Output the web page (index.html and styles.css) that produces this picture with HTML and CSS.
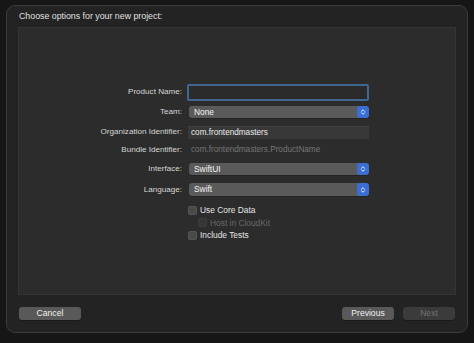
FILE: index.html
```html
<!DOCTYPE html>
<html lang="en">
<head>
<meta charset="utf-8">
<title>Choose options for your new project</title>
<link rel="stylesheet" href="styles.css">
</head>
<body>
<div class="window">
  <div class="title">Choose options for your new project:</div>
  <div class="panel">
    <div class="form">
      <div class="label r1">Product Name:</div>
      <div class="ctl r1"><div class="field focused"></div></div>

      <div class="label r2">Team:</div>
      <div class="ctl r2">
        <div class="popup"><span class="popup-text">None</span><span class="cap"><svg viewBox="0 0 8 10" width="6" height="8"><path d="M2 4 L4 2 L6 4 M2 6 L4 8 L6 6" fill="none" stroke="#fff" stroke-width="1.2" stroke-linecap="round" stroke-linejoin="round"/></svg></span></div>
      </div>

      <div class="label r3">Organization Identifier:</div>
      <div class="ctl r3"><div class="field plain">com.frontendmasters</div></div>

      <div class="label r4">Bundle Identifier:</div>
      <div class="ctl r4"><div class="bundle">com.frontendmasters.ProductName</div></div>

      <div class="label r5">Interface:</div>
      <div class="ctl r5">
        <div class="popup"><span class="popup-text">SwiftUI</span><span class="cap"><svg viewBox="0 0 8 10" width="6" height="8"><path d="M2 4 L4 2 L6 4 M2 6 L4 8 L6 6" fill="none" stroke="#fff" stroke-width="1.2" stroke-linecap="round" stroke-linejoin="round"/></svg></span></div>
      </div>

      <div class="label r6">Language:</div>
      <div class="ctl r6">
        <div class="popup"><span class="popup-text">Swift</span><span class="cap"><svg viewBox="0 0 8 10" width="6" height="8"><path d="M2 4 L4 2 L6 4 M2 6 L4 8 L6 6" fill="none" stroke="#fff" stroke-width="1.2" stroke-linecap="round" stroke-linejoin="round"/></svg></span></div>
      </div>

      <div class="ctl checks">
        <div class="check"><span class="box"></span><span>Use Core Data</span></div>
        <div class="check sub disabled"><span class="box"></span><span>Host in CloudKit</span></div>
        <div class="check"><span class="box"></span><span>Include Tests</span></div>
      </div>
    </div>
  </div>
  <div class="footer">
    <div class="btn cancel">Cancel</div>
    <div class="spacer"></div>
    <div class="btn">Previous</div>
    <div class="btn disabled">Next</div>
  </div>
</div>
</body>
</html>
```
FILE: styles.css
```css
html, body {
  margin: 0;
  padding: 0;
  background: #161616;
}
body {
  font-family: "Liberation Sans", Arial, sans-serif;
  width: 474px;
  height: 343px;
  overflow: hidden;
}
.window {
  margin: 5px 0 0 6px;
  width: 460px;
  height: 326px;
  border: 1px solid #3b3b3b;
  border-radius: 9px;
  background: #232323;
  display: flex;
  flex-direction: column;
}
.title {
  height: 21px;
  line-height: 21px;
  padding-left: 12px;
  font-size: 8.8px;
  color: #e0e0e0;
}
.panel {
  margin: 0 11px;
  height: 266px;
  background: #2c2c2c;
  border: 1px solid #353535;
}
.form {
  display: grid;
  grid-template-columns: 163px 181px;
  grid-template-rows: 20px 20px 20px 16px 21px 21px auto;
  column-gap: 6px;
  padding-top: 54px;
}
.label {
  grid-column: 1;
  text-align: right;
  font-size: 8.1px;
  color: #d6d6d6;
  align-self: center;
  line-height: 12px;
}
.ctl {
  grid-column: 2;
  align-self: center;
}
.field {
  box-sizing: border-box;
  height: 13px;
  background: #383838;
  font-size: 8.2px;
  line-height: 13px;
  color: #ececec;
  padding-left: 3px;
}
.field.plain {
  border-top: 1px solid #3f3f3f;
  line-height: 12px;
}
.field.focused {
  height: 17px;
  margin-left: -1px;
  background: #2a2a2a;
  border: 2px solid #41668f;
  border-radius: 2px;
}
.bundle {
  font-size: 8.2px;
  color: #767676;
  padding-left: 3px;
  line-height: 12px;
}
.popup {
  display: flex;
  height: 12px;
  width: 180px;
  margin-left: 1px;
  background: #5a5a5a;
  border-radius: 3px;
  overflow: hidden;
  box-shadow: 0 0.5px 0 rgba(0,0,0,0.4);
}
.r6 .popup { height: 13px; }
.popup-text {
  flex: 1;
  font-size: 8.4px;
  line-height: 12px;
  color: #f4f4f4;
  padding-left: 5px;
}
.r6 .popup-text { line-height: 13px; }
.cap {
  width: 12px;
  background: #3a6ed4;
  border-radius: 3px;
  display: flex;
  align-items: center;
  justify-content: center;
}
.checks {
  grid-row: 7;
  align-self: start;
  padding-top: 4px;
  display: flex;
  flex-direction: column;
  gap: 0.5px;
}
.check {
  display: flex;
  align-items: center;
  height: 12px;
  gap: 3px;
  font-size: 8.4px;
  color: #e4e4e4;
}
.box {
  box-sizing: border-box;
  width: 9px;
  height: 9px;
  border-radius: 2px;
  background: #4a4a4a;
  border: 0.5px solid #555;
}
.check.sub { padding-left: 10px; }
.check.disabled { color: #686868; }
.check.disabled .box { background: #353535; border-color: #3d3d3d; }
.footer {
  display: flex;
  align-items: flex-start;
  padding: 12px 12px 0 12px;
  gap: 9px;
}
.spacer { flex: 1; }
.btn {
  width: 52px;
  height: 13px;
  line-height: 13px;
  text-align: center;
  font-size: 8.6px;
  color: #f0f0f0;
  background: #595959;
  border-radius: 3px;
  box-shadow: 0 0.5px 0 rgba(0,0,0,0.5);
}
.btn.cancel { width: 62px; }
.btn.disabled {
  background: #3b3b3b;
  color: #707070;
}
```
